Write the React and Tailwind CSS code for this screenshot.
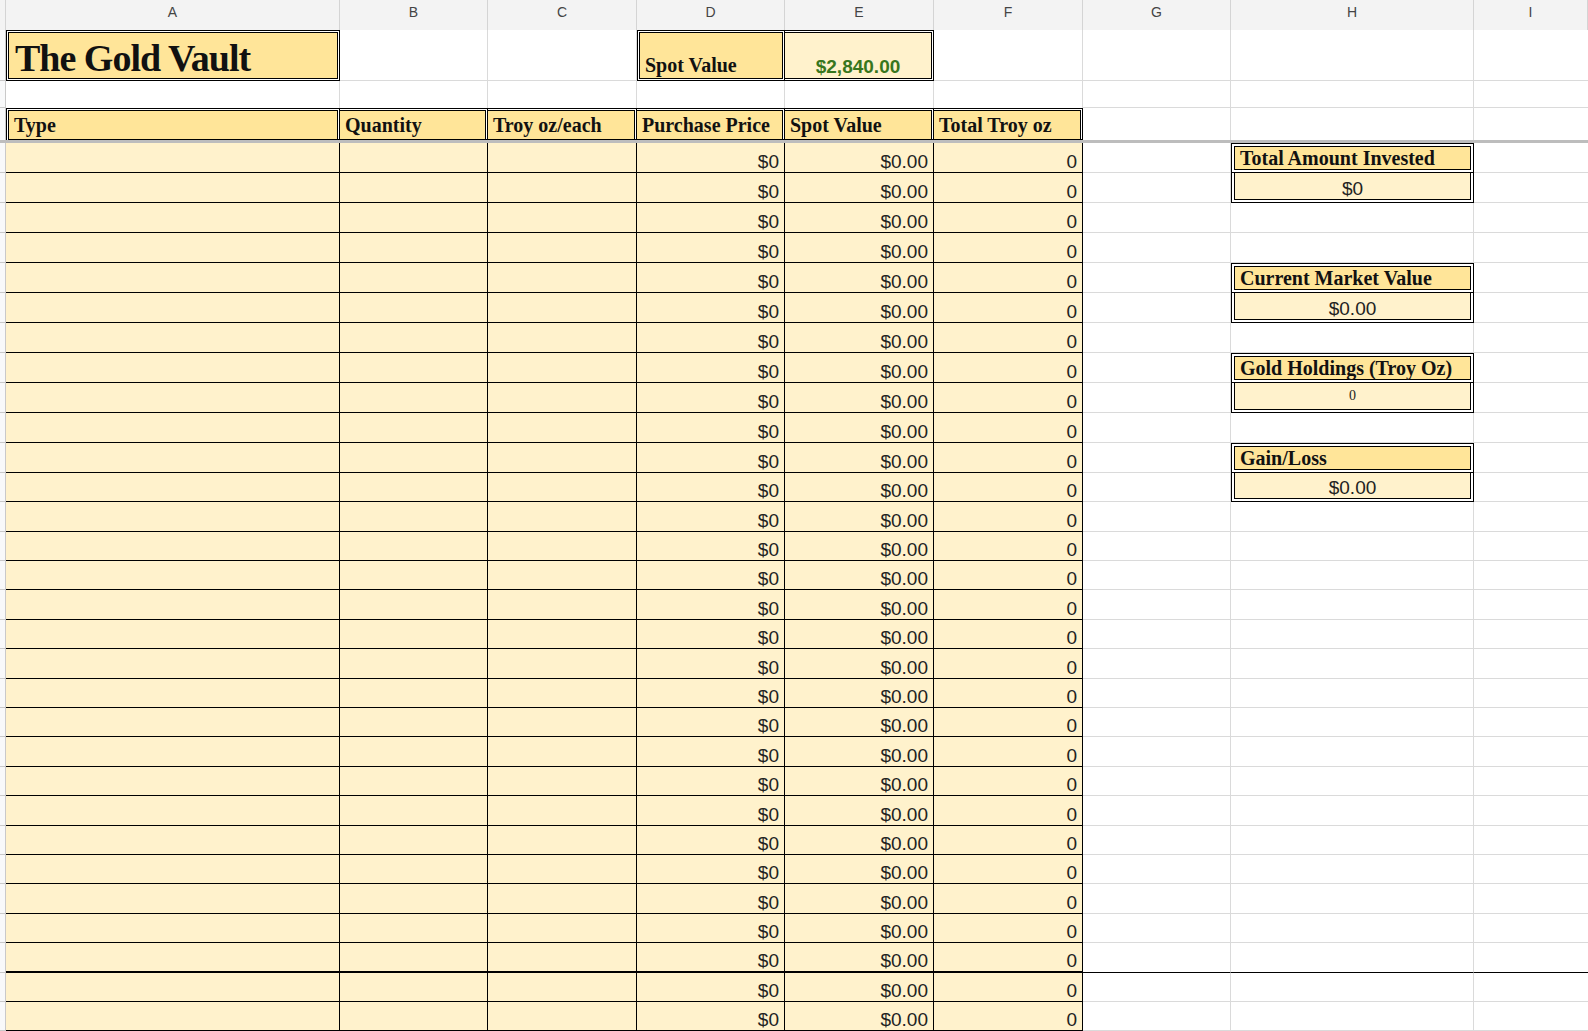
const SERIF = "font-['Liberation_Serif',serif]"
const SANS = "font-['Liberation_Sans',Arial,sans-serif]"

const COLS = [
  { key: 'A', w: 'w-[334px] shrink-0' },
  { key: 'B', w: 'w-[148px] shrink-0' },
  { key: 'C', w: 'w-[149px] shrink-0' },
  { key: 'D', w: 'w-[148px] shrink-0' },
  { key: 'E', w: 'w-[149px] shrink-0' },
  { key: 'F', w: 'w-[149px] shrink-0' },
  { key: 'G', w: 'w-[148px] shrink-0' },
  { key: 'H', w: 'w-[243px] shrink-0' },
  { key: 'I', w: 'flex-1 min-w-0' },
]
const W = Object.fromEntries(COLS.map(c => [c.key, c.w]))

const HEADERS = ['Type', 'Quantity', 'Troy oz/each', 'Purchase Price', 'Spot Value', 'Total Troy oz']

const ROW_H = [
  30, 30, 30, 30, 30, 30, 30, 30, 30, 30, 30,
  29, 30, 29, 29, 30, 29, 30, 29, 29, 30, 29, 30, 29, 29, 30, 29, 30,
  29, 29,
]
const H_CLASS = { 29: 'h-[29px]', 30: 'h-[30px]' }

const SUMMARY = {
  0: { head: 'Total Amount Invested' },
  1: { value: '$0' },
  4: { head: 'Current Market Value' },
  5: { value: '$0.00' },
  7: { head: 'Gold Holdings (Troy Oz)' },
  8: { value: '0', serif: true },
  10: { head: 'Gain/Loss' },
  11: { value: '$0.00' },
}

const GRID = 'border-[#dadada]'

function Gutter() {
  return <div className="w-[6px] shrink-0 bg-[#f8f9fa] border-r border-b border-[#c9c9c9]" />
}

function ColumnBar() {
  return (
    <div className="flex h-[30px] bg-[#f3f3f3]">
      <div className="w-[6px] shrink-0 border-r border-[#d4d4d4]" />
      {COLS.map(c => (
        <div
          key={c.key}
          className={`${c.w} flex items-center justify-center pb-[6px] border-r border-[#d4d4d4] text-[14px] text-[#444] ${SANS}`}
        >
          {c.key}
        </div>
      ))}
    </div>
  )
}

function TitleRow() {
  return (
    <div className="flex h-[51px] bg-white">
      <Gutter />
      <div className={`${W.A} border-[3px] border-double border-black bg-[#ffe599] bg-clip-padding flex items-end pl-[6px] pb-[1px]`}>
        <span className={`${SERIF} font-bold text-[38px] leading-none tracking-[-1px] text-[#111]`}>The Gold Vault</span>
      </div>
      <div className={`${W.B} border-r border-b ${GRID}`} />
      <div className={`${W.C} border-r border-b ${GRID}`} />
      <div className={`${W.D} border-[3px] border-double border-black bg-[#ffe599] bg-clip-padding flex items-end pl-[5px] pb-[3px]`}>
        <span className={`${SERIF} font-bold text-[20px] leading-none text-[#111]`}>Spot Value</span>
      </div>
      <div className={`${W.E} border-[3px] border-l-0 border-double border-black bg-[#fff2cc] bg-clip-padding flex items-end justify-center pb-[2px]`}>
        <span className={`${SANS} font-bold text-[19px] leading-none text-[#38761d]`}>$2,840.00</span>
      </div>
      <div className={`${W.F} border-r border-b ${GRID}`} />
      <div className={`${W.G} border-r border-b ${GRID}`} />
      <div className={`${W.H} border-r border-b ${GRID}`} />
      <div className={`${W.I} border-b ${GRID}`} />
    </div>
  )
}

function BlankRow() {
  return (
    <div className="flex h-[27px] bg-white">
      <Gutter />
      {['A', 'B', 'C', 'D', 'E', 'F'].map(k => (
        <div key={k} className={`${W[k]} border-r ${GRID}`} />
      ))}
      <div className={`${W.G} border-r border-b ${GRID}`} />
      <div className={`${W.H} border-r border-b ${GRID}`} />
      <div className={`${W.I} border-b ${GRID}`} />
    </div>
  )
}

function HeaderRow() {
  const keys = ['A', 'B', 'C', 'D', 'E', 'F']
  return (
    <div className="flex h-[32px] bg-white">
      <div className="w-[6px] shrink-0 bg-[#f8f9fa] border-r border-[#c9c9c9]" />
      {HEADERS.map((label, i) => (
        <div
          key={label}
          className={`${W[keys[i]]} ${i === 0 ? 'border-l-[3px]' : ''} border-t-[3px] border-r-[3px] border-b border-double border-black bg-[#ffe599] bg-clip-padding flex items-center pl-[5px]`}
        >
          <span className={`${SERIF} font-bold text-[20px] leading-none text-[#111] whitespace-nowrap`}>{label}</span>
        </div>
      ))}
      <div className={`${W.G} border-r ${GRID}`} />
      <div className={`${W.H} border-r ${GRID}`} />
      <div className={W.I} />
    </div>
  )
}

function SummaryCell({ item }) {
  if (item.head) {
    return (
      <div className={`${W.H} border-4 border-double border-black bg-[#ffe599] bg-clip-padding flex items-center pl-[5px]`}>
        <span className={`${SERIF} font-bold text-[20px] leading-none text-[#111] whitespace-nowrap`}>{item.head}</span>
      </div>
    )
  }
  return (
    <div className={`${W.H} border-4 border-t-0 border-double border-black bg-[#fff2cc] bg-clip-padding flex items-end justify-center pb-[1px]`}>
      {item.serif ? (
        <span className={`${SERIF} text-[14px] leading-none text-[#222] pb-[5px]`}>{item.value}</span>
      ) : (
        <span className={`${SANS} text-[19px] leading-none text-[#222]`}>{item.value}</span>
      )}
    </div>
  )
}

function DataRow({ index }) {
  const last = index === 27
  const line = last ? 'border-b-2' : 'border-b'
  const cell = `${line} border-r border-black bg-[#fff2cc] flex items-end justify-end pr-[5px] pb-[1px]`
  const num = `${SANS} text-[19px] leading-none text-[#222]`
  const side = last ? 'border-b-black' : ''
  const item = SUMMARY[index]
  return (
    <div className={`flex ${H_CLASS[ROW_H[index]]} bg-white`}>
      <Gutter />
      <div className={`${W.A} ${cell}`} />
      <div className={`${W.B} ${cell}`} />
      <div className={`${W.C} ${cell}`} />
      <div className={`${W.D} ${cell}`}><span className={num}>$0</span></div>
      <div className={`${W.E} ${cell}`}><span className={num}>$0.00</span></div>
      <div className={`${W.F} ${cell}`}><span className={num}>0</span></div>
      <div className={`${W.G} border-r border-b ${GRID} ${side}`} />
      {item ? <SummaryCell item={item} /> : <div className={`${W.H} border-r border-b ${GRID} ${side}`} />}
      <div className={`${W.I} border-b ${GRID} ${side}`} />
    </div>
  )
}

export default function App() {
  return (
    <div className="w-[1588px] h-[1031px] overflow-hidden bg-white">
      <ColumnBar />
      <TitleRow />
      <BlankRow />
      <HeaderRow />
      <div className="h-[3px] bg-[#bdbdbd]" />
      {ROW_H.map((_, i) => (
        <DataRow key={i} index={i} />
      ))}
    </div>
  )
}
